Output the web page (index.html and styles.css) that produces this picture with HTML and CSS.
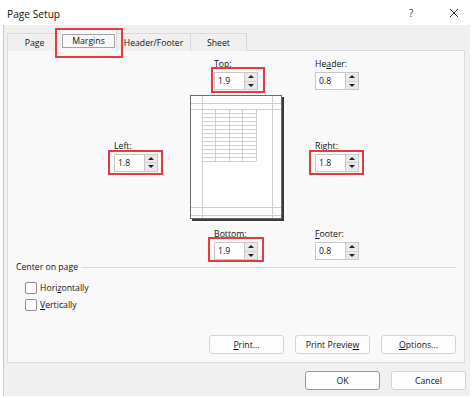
FILE: index.html
```html
<!DOCTYPE html>
<html>
<head>
<meta charset="utf-8">
<link rel="stylesheet" href="styles.css">
</head>
<body>
<div class="window">
  <div class="titlebar">
    <span class="title">Page Setup</span>
    <span class="help">?</span>
    <svg class="close" width="10" height="10" viewBox="0 0 10 10"><path d="M1 1L9 9M9 1L1 9" stroke="#2b2b2b" stroke-width="1"/></svg>
  </div>
  <div class="frame">
    <div class="tabs">
      <div class="tab tab-page">Page</div>
      <div class="tab tab-margins active"><span class="focus">Margins</span></div>
      <div class="tab tab-hf">Header/Footer</div>
      <div class="tab tab-sheet">Sheet</div>
    </div>
    <div class="panel">
      <div class="grid">
        <div class="field f-top">
          <div class="lbl">Top:</div>
          <div class="spin mark mark-top"><div class="val">1.9</div><div class="btns"><i class="up"></i><i class="down"></i></div></div>
        </div>
        <div class="field f-header">
          <div class="lbl">He<u>a</u>der:</div>
          <div class="spin"><div class="val">0.8</div><div class="btns"><i class="up"></i><i class="down"></i></div></div>
        </div>
        <div class="field f-left">
          <div class="lbl">Left:</div>
          <div class="spin mark mark-left"><div class="val">1.8</div><div class="btns"><i class="up"></i><i class="down"></i></div></div>
        </div>
        <svg class="preview" width="94" height="126" viewBox="0 0 94 126">
          <rect x="2" y="2" width="92" height="124" fill="#3a3a3a"/>
          <rect x="0.5" y="0.5" width="91" height="123" fill="#fff" stroke="#6a6a6a"/>
          <g stroke="#cfcfcf" stroke-width="1">
            <path d="M12.5 1V123M82.5 1V123M1 8.5H91M1 14.5H91M1 112.5H91M1 120.5H91"/>
            <path d="M25.5 14V66M39.5 14V66M52.5 14V66M66.5 14V66"/>
            <path d="M12 18.5H66M12 22.5H66M12 26.5H66M12 30.5H66M12 34.5H66M12 38.5H66M12 42.5H66M12 46.5H66M12 50.5H66M12 54.5H66M12 58.5H66M12 62.5H66M12 66.5H66"/>
          </g>
        </svg>
        <div class="field f-right">
          <div class="lbl"><u>R</u>ight:</div>
          <div class="spin mark mark-right"><div class="val">1.8</div><div class="btns"><i class="up"></i><i class="down"></i></div></div>
        </div>
        <div class="field f-bottom">
          <div class="lbl"><u>B</u>ottom:</div>
          <div class="spin mark mark-bottom"><div class="val">1.9</div><div class="btns"><i class="up"></i><i class="down"></i></div></div>
        </div>
        <div class="field f-footer">
          <div class="lbl"><u>F</u>ooter:</div>
          <div class="spin"><div class="val">0.8</div><div class="btns"><i class="up"></i><i class="down"></i></div></div>
        </div>
      </div>
      <div class="group">
        <div class="group-head"><span>Center on page</span><span class="rule"></span></div>
        <label class="check"><span class="box"></span>Hori<u>z</u>ontally</label>
        <label class="check"><span class="box"></span><u>V</u>ertically</label>
      </div>
      <div class="panel-buttons">
        <div class="btn"><u>P</u>rint...</div>
        <div class="btn">Print Previe<u>w</u></div>
        <div class="btn"><u>O</u>ptions...</div>
      </div>
    </div>
    <div class="dialog-buttons">
      <div class="btn btn-default">OK</div>
      <div class="btn">Cancel</div>
    </div>
  </div>
</div>
</body>
</html>
```
FILE: styles.css
```css
* { box-sizing: border-box; }
html, body { margin: 0; padding: 0; background: #fff; }
body {
  font-family: "Open Sans", "Noto Sans", sans-serif;
  font-size: 8.7px;
  color: #111;
}
u { text-decoration: underline; text-underline-offset: 1px; }
.window {
  width: 474px;
  height: 398px;
  display: flex;
  flex-direction: column;
}
.titlebar {
  height: 25px;
  display: flex;
  align-items: center;
  padding-left: 7px;
  background: #fff;
}
.title { font-size: 10.2px; color: #111; flex: 1; padding-top: 2px; }
.help { font-size: 10px; width: 8px; margin-right: 32px; color: #333; padding-top: 1px; }
.close { margin-right: 15px; }
.frame {
  margin: 0 4px 0 3px;
  border-left: 1px solid #c9c9c9;
  background: #f0f0f0;
  padding: 0 5px 6px 3px;
}
.tabs {
  height: 25px;
  display: flex;
  align-items: flex-end;
  position: relative;
  z-index: 1;
}
.tab {
  height: 18px;
  border: 1px solid #d9d9d9;
  border-bottom: none;
  display: flex;
  align-items: center;
  justify-content: center;
  background: #f0f0f0;
  margin-bottom: -1px;
}
.tab-page { width: 54px; border-right: none; }
.tab-margins { width: 56px; }
.tab-hf { width: 74px; border-left: none; }
.tab-sheet { width: 56px; border-left: none; }
.tab.active {
  height: 22px;
  background: #f9f9f9;
  position: relative;
  border-left: none;
}
.tab.active .focus {
  border: 1px solid #a3a3a3;
  padding: 0 9px;
  line-height: 12px;
  margin-top: 1px;
}
.tab.active::after {
  content: "";
  position: absolute;
  left: -6px;
  right: -7px;
  top: -2px;
  bottom: -7px;
  border: 2px solid #e23b40;
}
.panel {
  height: 313px;
  border: 1px solid #d9d9d9;
  background: #f9f9f9;
  display: flex;
  flex-direction: column;
  padding: 7px 8px 8px 0;
}
.grid {
  display: grid;
  grid-template-columns: 106px 76px 94px 31px 1fr;
  grid-template-rows: auto auto auto;
}
.field { display: flex; flex-direction: column; }
.lbl { line-height: 12px; height: 12px; margin-bottom: 2px; white-space: nowrap; }
.f-top { grid-column: 3; grid-row: 1; margin-left: 24px; }
.f-header { grid-column: 5; grid-row: 1; }
.f-left { grid-column: 2; grid-row: 2; align-self: center; }
.preview { grid-column: 3; grid-row: 2; margin-top: 5px; display: block; }
.f-right { grid-column: 5; grid-row: 2; align-self: center; }
.f-bottom { grid-column: 3; grid-row: 3; margin-left: 24px; margin-top: 7px; }
.f-footer { grid-column: 5; grid-row: 3; margin-top: 7px; }
.spin {
  width: 44px;
  height: 18px;
  display: flex;
  position: relative;
}
.val {
  flex: 1;
  background: #fff;
  border: 1px solid #c8c8c8;
  line-height: 16px;
  padding-left: 3px;
}
.btns {
  width: 13px;
  border: 1px solid #c8c8c8;
  border-left: none;
  background: #e9e9e9;
  display: flex;
  flex-direction: column;
}
.btns i {
  flex: 1;
  display: flex;
  align-items: center;
  justify-content: center;
}
.btns i.up { border-bottom: 1px solid #d2d2d2; }
.btns i::before {
  content: "";
  width: 0;
  height: 0;
  border-left: 3px solid transparent;
  border-right: 3px solid transparent;
}
.btns i.up::before { border-bottom: 3px solid #222; }
.btns i.down::before { border-top: 3px solid #222; }
.mark::after {
  content: "";
  position: absolute;
  left: -6px;
  right: -5px;
  top: -4px;
  bottom: -3px;
  border: 2px solid #e23b40;
}
.mark-top::after { left: -3px; right: -7px; top: -5px; }
.mark-bottom::after { top: -5px; bottom: -2px; right: -6px; }
.group { margin-top: 1px; }
.group-head {
  display: flex;
  align-items: center;
  padding-left: 8px;
  line-height: 12px;
}
.rule { flex: 1; height: 1px; background: #dcdcdc; margin-left: 3px; }
.check {
  display: flex;
  align-items: center;
  line-height: 12px;
  padding-left: 17px;
  margin-top: 9px;
}
.check + .check { margin-top: 5px; }
.box {
  width: 12px;
  height: 12px;
  border: 1px solid #8c8c8c;
  border-radius: 2px;
  background: #fff;
  margin-right: 3px;
}
.panel-buttons {
  margin-top: auto;
  display: flex;
  justify-content: flex-end;
  gap: 11px;
}
.btn {
  width: 75px;
  height: 19px;
  border: 1px solid #d3d3d3;
  border-radius: 3px;
  background: #fdfdfd;
  display: flex;
  align-items: center;
  justify-content: center;
}
.dialog-buttons {
  margin-top: 8px;
  margin-right: -1px;
  display: flex;
  justify-content: flex-end;
  gap: 11px;
}
.btn-default { border-color: #6aa3dc; }
```
